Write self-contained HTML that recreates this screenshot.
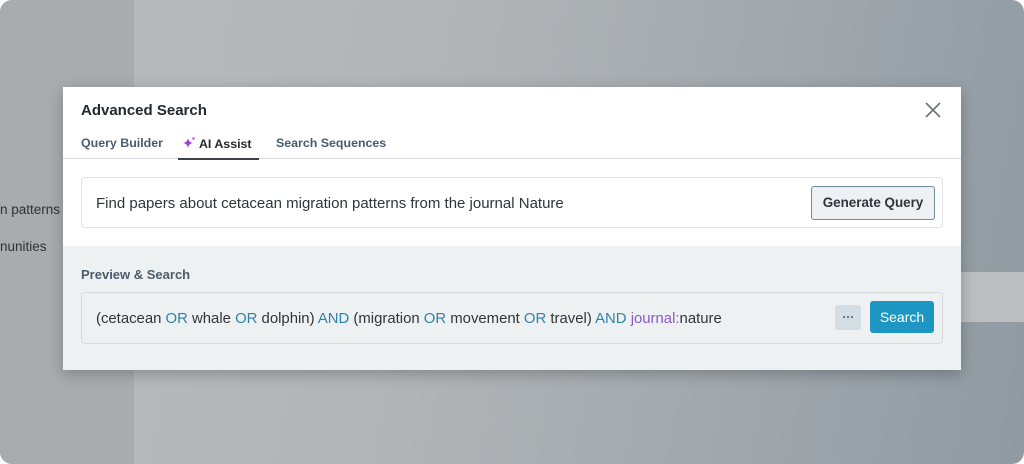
<!DOCTYPE html>
<html><head><style>
*{box-sizing:border-box;margin:0;padding:0}
body{width:1024px;height:464px;background:#fff;font-family:"Liberation Sans",sans-serif;position:relative;overflow:hidden}
.bg{position:absolute;left:0;top:0;width:1024px;height:464px;border-radius:12px;overflow:hidden;background:linear-gradient(100deg,#b9babb 0%,#b2b5b7 40%,#a2a9ae 70%,#8f9aa2 100%)}
.strip{position:absolute;left:0;top:0;width:134px;height:464px;background:#a9acad}
.band{position:absolute;left:940px;top:272px;width:84px;height:50px;background:#bdbebf}
.side{position:absolute;font-size:13.5px;color:#2c3236}
.modal{position:absolute;left:63px;top:87px;width:898px;height:283px;background:#fff;box-shadow:0 4px 14px rgba(0,0,0,.25)}
.title{position:absolute;left:18px;top:15px;font-size:15px;font-weight:bold;color:#24292d}
.close{position:absolute;left:862px;top:15px}
.tabs{position:absolute;left:0;top:40px;width:898px;height:32px;border-bottom:1px solid #d6dadd}
.tab{position:absolute;top:9px;font-size:12.4px;font-weight:bold;color:#4a5d6b}
.active{border-bottom:2px solid #3c4145;color:#24292d;height:24px}
.inp{position:absolute;left:18px;top:90px;width:862px;height:51px;border:1px solid #e1e4e6;border-radius:4px;font-size:15px;color:#2f3538;padding:17px 0 0 14px}
.gen{position:absolute;left:729px;top:8px;width:124px;height:34px;border:1.5px solid #6f8a9b;border-radius:3px;background:#eef1f3;font-size:13.4px;font-weight:bold;color:#2f3538;text-align:center;line-height:31px}
.grey{position:absolute;left:0;top:159px;width:898px;height:124px;background:#eef1f2}
.plab{position:absolute;left:18px;top:21px;font-size:13px;font-weight:bold;color:#4a5d6b}
.q{position:absolute;left:18px;top:46px;width:862px;height:52px;border:1px solid #d6dadd;border-radius:4px;font-size:14.9px;color:#2f3538;padding:18px 0 0 14px}
.op{color:#3282a8}.j{color:#8d58c9}
.dots{position:absolute;left:753px;top:12px;width:26px;height:25px;background:#d3dee4;border-radius:3px}
.dots i{position:absolute;top:11px;width:2.4px;height:2.4px;border-radius:50%;background:#4a5d6b}
.sb{position:absolute;left:788px;top:8px;width:64px;height:32px;background:#1e96c3;border-radius:3px;color:#fff;font-size:14px;text-align:center;line-height:32px}
</style></head><body>
<div class="bg"><div class="strip"></div><div class="band"></div>
<div class="side" style="left:0;top:202px">n patterns</div>
<div class="side" style="left:0;top:239px">nunities</div>
</div>
<div class="modal">
<div class="title">Advanced Search</div>
<svg class="close" width="16" height="16" viewBox="0 0 16 16"><path d="M1 1L15 15M15 1L1 15" stroke="#6d7479" stroke-width="1.6"/></svg>
<div class="tabs">
<div class="tab" style="left:18px">Query Builder</div>
<div class="tab active" style="left:115px;width:81px;padding-left:4px"><svg width="14" height="14" viewBox="0 0 14 14" style="vertical-align:-2px"><path d="M6 2Q6.6 6.4 11 7Q6.6 7.6 6 12Q5.4 7.6 1 7Q5.4 6.4 6 2Z" fill="#a040d8"/><circle cx="11.5" cy="2.5" r="1.3" fill="#c060e0"/></svg> AI Assist</div>
<div class="tab" style="left:213px">Search Sequences</div>
</div>
<div class="inp">Find papers about cetacean migration patterns from the journal Nature<div class="gen">Generate Query</div></div>
<div class="grey">
<div class="plab">Preview &amp; Search</div>
<div class="q">(cetacean <span class="op">OR</span> whale <span class="op">OR</span> dolphin) <span class="op">AND</span> (migration <span class="op">OR</span> movement <span class="op">OR</span> travel) <span class="op">AND</span> <span class="j">journal:</span>nature<div class="dots"><i style="left:8px"></i><i style="left:12px"></i><i style="left:16px"></i></div><div class="sb">Search</div></div>
</div>
</div>
</body></html>
